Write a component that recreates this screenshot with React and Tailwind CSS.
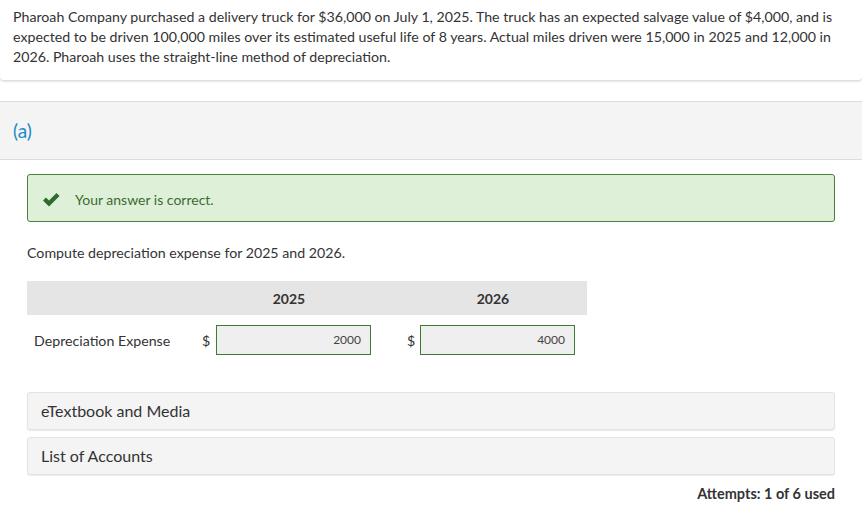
import React from 'react';

const App = () => {
    return (
        <div className="min-h-screen bg-white text-[#333] font-['Lato','Liberation_Sans',sans-serif]">
            {/* Question text */}
            <div className="rounded-b-sm bg-white px-[13px] pt-[7px] pb-[13px] shadow-[0_1px_3px_rgba(0,0,0,0.2)] text-[14.2px] leading-[20px] text-[#333]">
                Pharoah Company purchased a delivery truck for $36,000 on July 1, 2025. The truck has an expected salvage value of $4,000, and is expected to be driven 100,000 miles over its estimated useful life of 8 years. Actual miles driven were 15,000 in 2025 and 12,000 in 2026. Pharoah uses the straight-line method of depreciation.
            </div>

            {/* Part header */}
            <div className="mt-[21px] h-[59px] flex items-center border-y border-[#dcdcdc] bg-[#f4f4f4] px-[13px]">
                <span className="pt-[1px] text-[19px] text-[#1a8ac6]">(a)</span>
            </div>

            <div className="px-[27px] pt-[14px]">
                {/* Correct answer alert */}
                <div className="flex h-[48px] w-[808px] items-center rounded-[3px] border border-[#4b7f3d] bg-[#dff0d8] pl-[14px] pt-[2px] text-[14px] text-[#3c6a34]">
                    <svg width="18" height="15" viewBox="0 0 18 15" className="mr-[15px]">
                        <path d="M1 8.5 L4 5.5 L7 8.5 L14.5 1 L17.5 4 L7 14.5 Z" fill="#2e6b2e" />
                    </svg>
                    Your answer is correct.
                </div>

                <p className="mt-[20px] text-[14.2px] text-[#333]">Compute depreciation expense for 2025 and 2026.</p>

                {/* Table */}
                <div className="mt-[18px] w-[560px]">
                    <div className="flex h-[34px] items-center bg-[#e5e5e5] text-[14px] font-bold text-[#333]">
                        <div className="w-[179px]"></div>
                        <div className="w-[166px] text-center">2025</div>
                        <div className="w-[38px]"></div>
                        <div className="w-[166px] text-center">2026</div>
                    </div>
                    <div className="mt-[10px] flex items-center text-[14.2px] text-[#333]">
                        <div className="w-[175px] pl-[7px]">Depreciation Expense</div>
                        <span className="w-[14px] text-[#333]">$</span>
                        <div className="flex h-[30px] w-[155px] items-center justify-end border border-[#3f7a35] bg-[#efefef] pr-[9px] text-[12px] text-[#444]">2000</div>
                        <div className="w-[36px]"></div>
                        <span className="w-[13px]">$</span>
                        <div className="flex h-[30px] w-[155px] items-center justify-end border border-[#3f7a35] bg-[#efefef] pr-[9px] text-[12px] text-[#444]">4000</div>
                    </div>
                </div>

                {/* Resource panels */}
                <div className="mt-[37px] flex w-[808px] flex-col gap-[7px]">
                    <div className="flex h-[38px] items-center rounded-[3px] border border-[#e3e3e3] bg-[#f4f4f4] pl-[13px] text-[16px] text-[#333] shadow-[0_1px_1px_rgba(0,0,0,0.08)]">
                        eTextbook and Media
                    </div>
                    <div className="flex h-[38px] items-center rounded-[3px] border border-[#e3e3e3] bg-[#f4f4f4] pl-[13px] text-[16px] text-[#333] shadow-[0_1px_1px_rgba(0,0,0,0.08)]">
                        List of Accounts
                    </div>
                </div>

                <div className="mt-[8px] w-[808px] text-right text-[14.5px] font-bold text-[#333]">
                    Attempts: 1 of 6 used
                </div>
            </div>
        </div>
    );
};

export default App;
